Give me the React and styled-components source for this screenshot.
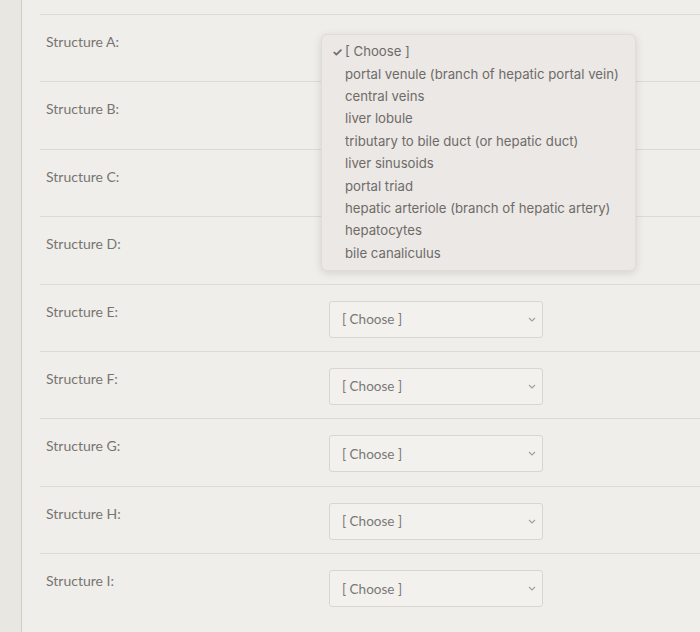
import styled, { createGlobalStyle } from 'styled-components';

const GlobalStyle = createGlobalStyle`
  html, body {
    margin: 0;
    background: #e9e7e2;
  }
`;

// the question panel, with its left rule
const Page = styled.div`
  width: 700px;
  height: 632px;
  box-sizing: border-box;
  margin-left: 21px;
  border-left: 1px solid #cfcdc8;
  background: #f0eeea;
  padding: 14px 0 0 18px;
  overflow: hidden;
`;

const Row = styled.div`
  display: flex;
  align-items: flex-start;
  height: 67.4px;
  box-sizing: border-box;
  border-top: 1px solid #dcdad5;
  padding: 16px 0 0 6px;
`;

const Label = styled.div`
  width: 283px;
  padding-top: 2px;
  font-family: Lato, "Liberation Sans", sans-serif;
  font-size: 14px;
  color: #777572;
`;

const SelectWrap = styled.div`
  position: relative;
`;

const Select = styled.div`
  display: flex;
  align-items: center;
  justify-content: space-between;
  width: 214px;
  height: 37px;
  box-sizing: border-box;
  padding: 0 6px 0 12px;
  border: 1px solid #d8d6d1;
  border-radius: 3px;
  background: #f3f1ed;
  font-family: Lato, "Liberation Sans", sans-serif;
  font-size: 13.5px;
  color: #7a7875;
`;

const Menu = styled.div`
  position: absolute;
  left: -8px;
  top: 3px;
  z-index: 2;
  width: 315px;
  box-sizing: border-box;
  padding: 5px 0 6px;
  border-radius: 6px;
  background: #ebe8e5;
  border: 1px solid #e0ddd9;
  box-shadow: 0 2px 8px rgba(0, 0, 0, 0.12);
  font-family: Inter, "Open Sans", sans-serif;
  font-size: 13.2px;
  color: #6e6b68;
`;

const Option = styled.div`
  display: flex;
  align-items: center;
  height: 22.4px;
  padding-left: ${p => (p.checked ? '10px' : '23px')};
  white-space: nowrap;
`;

const Check = styled.span`
  width: 13px;
  font-size: 12px;
  font-weight: 700;
  color: #6e6b68;
`;

const options = [
  'portal venule (branch of hepatic portal vein)',
  'central veins',
  'liver lobule',
  'tributary to bile duct (or hepatic duct)',
  'liver sinusoids',
  'portal triad',
  'hepatic arteriole (branch of hepatic artery)',
  'hepatocytes',
  'bile canaliculus',
];

const structures = ['A', 'B', 'C', 'D', 'E', 'F', 'G', 'H', 'I'];

function Chevron() {
  return (
    <svg width="8" height="5" viewBox="0 0 8 5">
      <path d="M1 1l3 3 3-3" fill="none" stroke="#a3a19d" strokeWidth="1.2" />
    </svg>
  );
}

function App() {
  return (
    <>
      <GlobalStyle />
      <Page>
        {structures.map((s, i) => (
          <Row key={s}>
            <Label>Structure {s}:</Label>
            <SelectWrap>
              {i === 0 && (
                <Menu>
                  <Option checked>
                    <Check>✓</Check>[ Choose ]
                  </Option>
                  {options.map(o => (
                    <Option key={o}>{o}</Option>
                  ))}
                </Menu>
              )}
              {i >= 4 && (
                <Select>
                  [ Choose ]
                  <Chevron />
                </Select>
              )}
            </SelectWrap>
          </Row>
        ))}
      </Page>
    </>
  );
}

export default App;
